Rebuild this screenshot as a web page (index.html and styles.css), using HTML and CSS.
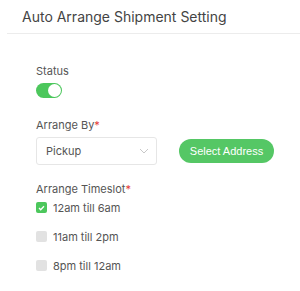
FILE: index.html
```html
<!DOCTYPE html>
<html lang="en">
<head>
    <meta charset="UTF-8">
    <meta name="viewport" content="width=device-width, initial-scale=1.0">
    <title>Auto Arrange Shipment Setting</title>
    <link rel="stylesheet" href="styles.css">
</head>
<body>
    <div class="panel">
        <div class="panel-header">Auto Arrange Shipment Setting</div>
        <div class="panel-body">
            <div class="field field-status">
                <div class="label">Status</div>
                <label class="toggle">
                    <input type="checkbox" checked>
                    <span class="slider"></span>
                </label>
            </div>

            <div class="field">
                <div class="label">Arrange By<span class="req">*</span></div>
                <div class="row">
                    <div class="select">
                        <span>Pickup</span>
                        <svg width="10" height="6" viewBox="0 0 10 6"><path d="M1 1l4 4 4-4" fill="none" stroke="#c8c8c8" stroke-width="1"/></svg>
                    </div>
                    <button class="btn">Select Address</button>
                </div>
            </div>

            <div class="field">
                <div class="label">Arrange Timeslot<span class="req">*</span></div>
                <div class="slots">
                    <label class="check checked"><span class="box"><svg width="7" height="6" viewBox="0 0 7 6"><path d="M1 3l1.7 1.7L6 1.3" fill="none" stroke="#fff" stroke-width="1.3"/></svg></span>12am till 6am</label>
                    <label class="check"><span class="box"></span>11am till 2pm</label>
                    <label class="check"><span class="box"></span>8pm till 12am</label>
                </div>
            </div>
        </div>
    </div>
</body>
</html>
```

FILE: styles.css
```css
body {
    margin: 0;
    background: #fff;
    font-family: 'Inter', 'Noto Sans', sans-serif;
    color: #555;
}
.panel {
    margin-left: 7px;
}
.panel-header {
    font-size: 14px;
    color: #444;
    padding: 8px 0 0 15px;
    height: 25px;
    border-bottom: 1px solid #ececec;
}
.panel-body {
    padding: 30px 0 0 29px;
}
.field {
    margin-bottom: 17px;
}
.field-status {
    margin-bottom: 20px;
}
.label {
    font-size: 11px;
    color: #555;
    line-height: 14px;
    margin-bottom: 5px;
}
.req {
    color: #e53935;
}
.toggle {
    display: block;
    position: relative;
    width: 26px;
    height: 15px;
    margin-top: 2px;
}
.toggle input {
    display: none;
}
.slider {
    position: absolute;
    inset: 0;
    background: #4cc75c;
    border-radius: 8px;
}
.slider::after {
    content: '';
    position: absolute;
    right: 1px;
    top: 1px;
    width: 13px;
    height: 13px;
    border-radius: 50%;
    background: #fff;
}
.row {
    display: flex;
    align-items: center;
    gap: 22px;
}
.select {
    box-sizing: border-box;
    width: 121px;
    height: 28px;
    border: 1px solid #e6e6e6;
    border-radius: 3px;
    display: flex;
    align-items: center;
    justify-content: space-between;
    padding: 0 7px 0 9px;
    font-size: 11px;
    color: #555;
}
.btn {
    width: 95px;
    height: 24px;
    border: none;
    border-radius: 12px;
    background: #55c765;
    color: #fff;
    font-family: 'Liberation Sans', Arial, sans-serif;
    font-size: 11px;
    padding: 0;
}
.slots {
    display: flex;
    flex-direction: column;
    gap: 16px;
}
.check {
    display: flex;
    align-items: center;
    gap: 6px;
    font-size: 11px;
    color: #555;
    height: 13px;
}
.box {
    width: 11px;
    height: 11px;
    border-radius: 2px;
    background: #e2e2e2;
    display: flex;
    align-items: center;
    justify-content: center;
}
.check.checked .box {
    background: #4cc75c;
}
```
